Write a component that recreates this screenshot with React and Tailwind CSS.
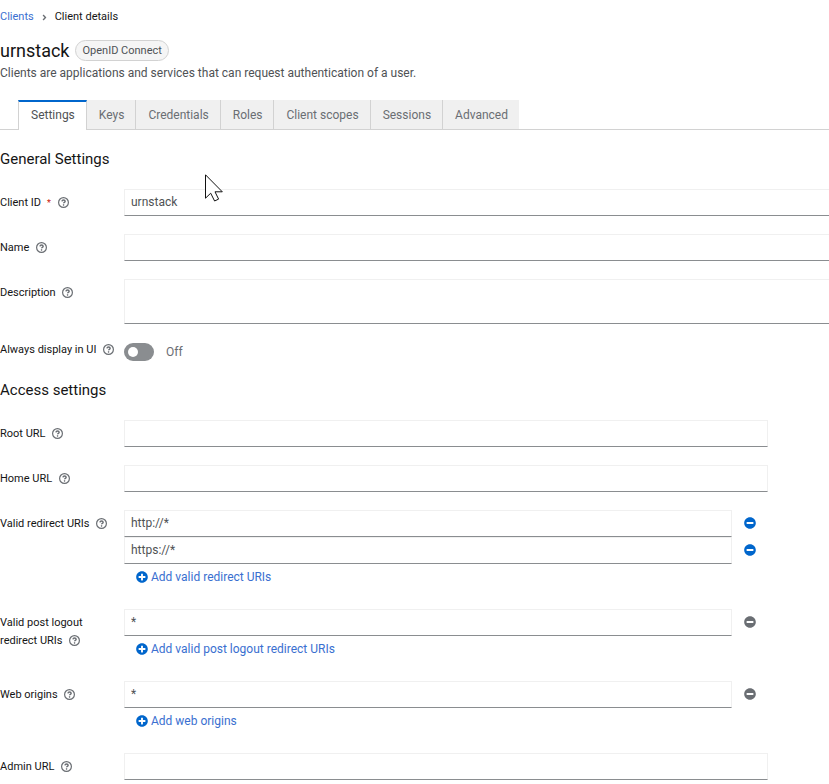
import { useState } from 'react';
import { FaAngleRight, FaMinusCircle, FaPlusCircle } from 'react-icons/fa';

const TABS = ['Settings', 'Keys', 'Credentials', 'Roles', 'Client scopes', 'Sessions', 'Advanced'];

const fieldClass =
  'block w-full border border-[#f0f0f0] border-b-[#8a8d90] bg-white px-1.5 pb-0.5 text-[12px] text-[#4f5255] outline-none focus:border-b-[#0066cc]';

function HelpButton({ topic }) {
  return (
    <button type="button" aria-label={`More info for ${topic}`} className="ml-1 inline-flex align-[-2px] text-[#6a6e73]">
      <svg width="11" height="11" viewBox="0 0 22 22" fill="none" stroke="currentColor">
        <circle cx="11" cy="11" r="9.8" strokeWidth="2.4" />
        <path d="M7.8 8.6c.3-1.8 1.5-2.7 3.3-2.7 1.9 0 3.2 1 3.2 2.6 0 2.3-3 2.3-3 4.2" strokeWidth="2.8" />
        <circle cx="11.2" cy="15.8" r="1.1" fill="currentColor" strokeWidth="1" />
      </svg>
    </button>
  );
}

function FormRow({ id, label, required, children }) {
  return (
    <div className="flex">
      <div className="w-[124px] shrink-0 pt-[5px] pr-3 text-[11px] leading-[18px] text-[#151515]">
        <label htmlFor={id}>
          {label}
          {required && <span className="ml-1.5 text-[9px] text-[#c9190b]">*</span>}
        </label>{' '}
        <HelpButton topic={label} />
      </div>
      <div className="min-w-0 flex-1">{children}</div>
    </div>
  );
}

function MultiInput({ id, label, initial, addLabel }) {
  const [values, setValues] = useState(initial);
  const single = values.length === 1;

  return (
    <>
      {values.map((value, i) => (
        <div key={i} className="flex">
          <input
            id={i === 0 ? id : undefined}
            aria-label={`${label} ${i + 1}`}
            value={value}
            onChange={(e) => setValues(values.map((v, j) => (j === i ? e.target.value : v)))}
            className={`${fieldClass} h-[27px]`}
          />
          <button
            type="button"
            aria-label={`Remove ${label} ${i + 1}`}
            disabled={single}
            onClick={() => setValues(values.filter((_, j) => j !== i))}
            className="flex w-9 shrink-0 items-center justify-center pb-px text-[#0066cc] disabled:text-[#6a6e73]"
          >
            <FaMinusCircle size={12} />
          </button>
        </div>
      ))}
      <button
        type="button"
        onClick={() => setValues([...values, ''])}
        className="flex h-[27px] items-center gap-[3px] px-3 pb-px text-[12px] text-[#3a6fd0]"
      >
        <FaPlusCircle size={12} className="text-[#0066cc]" />
        {addLabel}
      </button>
    </>
  );
}

function Switch({ id }) {
  const [on, setOn] = useState(false);

  return (
    <label className="flex items-center gap-3 pt-px text-[12px] leading-[18px] text-[#6a6e73]">
      <input id={id} type="checkbox" checked={on} onChange={(e) => setOn(e.target.checked)} className="peer sr-only" />
      <span className="flex h-[18px] w-[30px] items-center rounded-full bg-[#8a8d90] px-1 peer-checked:justify-end peer-checked:bg-[#0066cc]">
        <span className="size-[10px] rounded-full bg-white" />
      </span>
      {on ? 'On' : 'Off'}
    </label>
  );
}

function Pointer() {
  return (
    <svg width="18" height="28" viewBox="0 0 18 28" className="pointer-events-none absolute top-[174px] left-[205px]">
      <path d="M.5.8v23.4l5.2-5 3.9 7.8 4-1.9-3.6-7.3h7.3z" fill="#fff" stroke="#111" />
    </svg>
  );
}

export default function App() {
  const [tab, setTab] = useState('Settings');

  return (
    <div className="relative min-h-screen overflow-hidden bg-white pt-2 font-[Roboto,sans-serif] text-[#151515]">
      <nav aria-label="Breadcrumb" className="flex items-center gap-1.5 text-[11px] leading-[18px]">
        <a href="#clients" className="text-[#3a6fd0]">Clients</a>
        <FaAngleRight size={9} className="text-[#6a6e73]" />
        <span>Client details</span>
      </nav>

      <header className="mt-[14px]">
        <div className="flex h-[21px] items-center gap-1.5">
          <h1 className="text-[18px]">urnstack</h1>
          <span className="flex h-[21px] items-center rounded-full border border-[#d2d2d2] bg-[#f5f5f5] px-1.5 pt-px text-[11px] text-[#4f5255]">
            OpenID Connect
          </span>
        </div>
        <p className="mt-[3px] text-[12px] leading-[18px] text-[#4f5255]">
          Clients are applications and services that can request authentication of a user.
        </p>
      </header>

      <div role="tablist" className="mt-[18px] flex h-[30px] border-b border-[#d2d2d2] pl-[18px]">
        {TABS.map((name) => (
          <button
            key={name}
            type="button"
            role="tab"
            aria-selected={tab === name}
            onClick={() => setTab(name)}
            className={`border-r border-[#d2d2d2] pr-[11px] pl-3 text-[12px] last:border-r-0 ${
              tab === name
                ? '-mb-px border-t-2 border-l border-t-[#0066cc] bg-white pb-0.5 text-[#4f5255]'
                : 'bg-[#f0f0f0] text-[#6a6e73]'
            }`}
          >
            {name}
          </button>
        ))}
      </div>

      <form className="mt-[17px] flex flex-col gap-[18px]" onSubmit={(e) => e.preventDefault()}>
        <h2 className="text-[15px] leading-6">General Settings</h2>
        <FormRow id="clientId" label="Client ID" required>
          <input id="clientId" defaultValue="urnstack" className={`${fieldClass} h-[27px] border-r-0`} />
        </FormRow>
        <FormRow id="name" label="Name">
          <input id="name" className={`${fieldClass} h-[27px] border-r-0`} />
        </FormRow>
        <FormRow id="description" label="Description">
          <textarea id="description" className={`${fieldClass} h-[45px] resize-none border-r-0`} />
        </FormRow>
        <div className="flex">
          <div className="w-[124px] shrink-0 text-[11px] leading-4 whitespace-nowrap">
            <label htmlFor="alwaysDisplay">Always display in UI</label> <HelpButton topic="Always display in UI" />
          </div>
          <Switch id="alwaysDisplay" />
        </div>

        <h2 className="text-[15px] leading-[23px]">Access settings</h2>
        <div className="flex flex-col gap-[18px] pr-[61px]">
          <FormRow id="rootUrl" label="Root URL">
            <input id="rootUrl" className={`${fieldClass} h-[27px]`} />
          </FormRow>
          <FormRow id="homeUrl" label="Home URL">
            <input id="homeUrl" className={`${fieldClass} h-[27px]`} />
          </FormRow>
          <FormRow id="redirectUris" label="Valid redirect URIs">
            <MultiInput
              id="redirectUris"
              label="Valid redirect URIs"
              initial={['http://*', 'https://*']}
              addLabel="Add valid redirect URIs"
            />
          </FormRow>
          <FormRow id="logoutUris" label="Valid post logout redirect URIs">
            <MultiInput
              id="logoutUris"
              label="Valid post logout redirect URIs"
              initial={['*']}
              addLabel="Add valid post logout redirect URIs"
            />
          </FormRow>
          <FormRow id="webOrigins" label="Web origins">
            <MultiInput id="webOrigins" label="Web origins" initial={['*']} addLabel="Add web origins" />
          </FormRow>
          <FormRow id="adminUrl" label="Admin URL">
            <input id="adminUrl" className={`${fieldClass} h-[27px]`} />
          </FormRow>
        </div>
      </form>
      <Pointer />
    </div>
  );
}
